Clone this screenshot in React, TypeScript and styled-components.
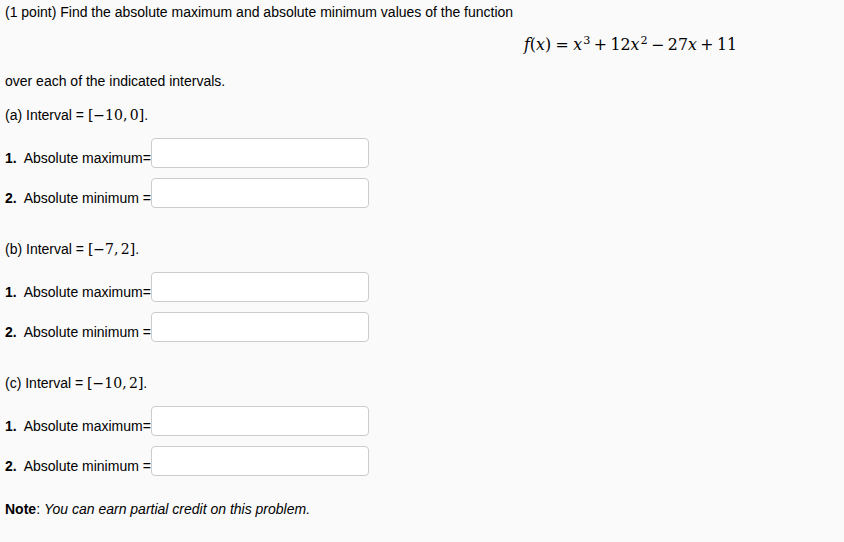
import React from "react";
import styled, { createGlobalStyle } from "styled-components";

const Global = createGlobalStyle`
  html, body { margin: 0; padding: 0; background: #fafafa; }
  body {
    font-family: "Liberation Sans", Arial, sans-serif;
    font-size: 14px;
    color: #000;
  }
`;

const Page = styled.div`
  padding: 2px 5px 0;
  width: 844px;
  box-sizing: border-box;
`;

const Line = styled.div<{ $mt?: number }>`
  line-height: 20px;
  margin-top: ${(p) => p.$mt ?? 0}px;
  white-space: nowrap;
`;

const Display = styled.div`
  margin-top: 11px;
  height: 24px;
  line-height: 24px;
  padding-left: 519px;
  white-space: nowrap;
`;

const Math = styled.span<{ $size: number }>`
  font-family: "DejaVu Serif", "Liberation Serif", serif;
  font-size: ${(p) => p.$size}px;
  line-height: 14px;
  white-space: nowrap;
`;

const V = styled.i`
  font-style: italic;
`;

const Sup = styled.sup`
  font-size: 0.71em;
  line-height: 0;
  vertical-align: 0.5em;
  margin-left: 1px;
`;

const Bin = styled.span`
  margin: 0 0.22em;
`;

const Rel = styled.span`
  margin: 0 0.28em;
`;

const Punct = styled.span`
  margin-right: 0.17em;
`;

const Group = styled.div<{ $mt: number }>`
  margin-top: ${(p) => p.$mt}px;
  display: flex;
  flex-direction: column;
  gap: 10px;
`;

const Row = styled.div`
  display: flex;
  align-items: flex-end;
`;

const Label = styled.span`
  line-height: 20px;
  white-space: nowrap;
`;

const Num = styled.b`
  font-weight: bold;
  margin-right: 7px;
`;

const Field = styled.input`
  box-sizing: border-box;
  width: 218px;
  height: 30px;
  margin: 0;
  padding: 4px 6px;
  border: 1px solid #cccccc;
  border-radius: 4px;
  background: #fff;
  font-family: "Liberation Sans", Arial, sans-serif;
  font-size: 14px;
  outline: none;
`;

const Em = styled.i`
  font-style: italic;
`;

const Interval: React.FC<{ a: string; b: string }> = ({ a, b }) => (
  <Math $size={14}>
    [−{a}
    <Punct>,</Punct>
    {b}]
  </Math>
);

const Answers: React.FC<{ mt: number }> = ({ mt }) => (
  <Group $mt={mt}>
    <Row>
      <Label>
        <Num>1.</Num>Absolute maximum=
      </Label>
      <Field type="text" />
    </Row>
    <Row>
      <Label>
        <Num>2.</Num>Absolute minimum =
      </Label>
      <Field type="text" />
    </Row>
  </Group>
);

export default function App() {
  return (
    <Page>
      <Global />
      <Line>(1 point) Find the absolute maximum and absolute minimum values of the function</Line>
      <Display>
        <Math $size={15.8}>
          <V>f</V>(<V>x</V>)<Rel>=</Rel>
          <V>x</V>
          <Sup>3</Sup>
          <Bin>+</Bin>12<V>x</V>
          <Sup>2</Sup>
          <Bin>−</Bin>27<V>x</V>
          <Bin>+</Bin>11
        </Math>
      </Display>
      <Line $mt={14}>over each of the indicated intervals.</Line>
      <Line $mt={14}>
        (a) Interval = <Interval a="10" b="0" />.
      </Line>
      <Answers mt={13} />
      <Line $mt={31}>
        (b) Interval = <Interval a="7" b="2" />.
      </Line>
      <Answers mt={13} />
      <Line $mt={31}>
        (c) Interval = <Interval a="10" b="2" />.
      </Line>
      <Answers mt={13} />
      <Line $mt={23}>
        <b>Note</b>: <Em>You can earn partial credit on this problem.</Em>
      </Line>
    </Page>
  );
}
